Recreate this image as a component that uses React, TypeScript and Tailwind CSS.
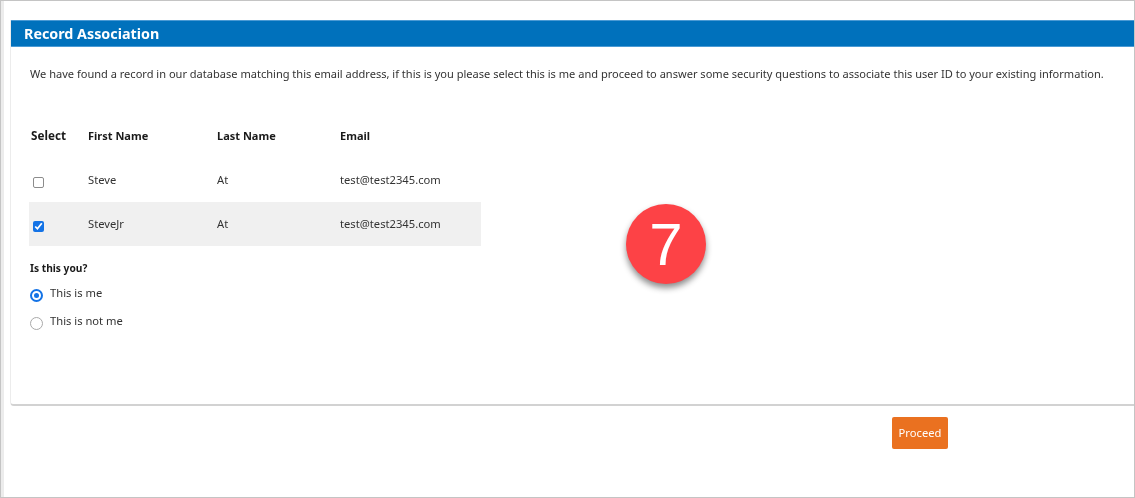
export default function App() {
  const rows = [
    { first: "Steve", checked: false },
    { first: "SteveJr", checked: true },
  ];
  return (
    <div className="relative h-[498px] w-[1135px] overflow-hidden border border-[#c4c4c4] bg-white font-['Noto_Sans',sans-serif] text-[#333]">
      <div className="h-full border-l-[3px] border-[#ececec] pl-[6px] pt-[19px] blur-[0.35px]">
        <div className="h-[386px] rounded-bl-[4px] border-b-2 border-l border-[#d2d2d2] border-l-[#ececec]">
          <div className="flex h-[27px] items-center border-y border-[#4a9ad4] bg-[#0071bc] pl-[13px] text-[14.3px] font-bold text-white">
            Record Association
          </div>
          <p className="mt-[18px] ml-[19px] whitespace-nowrap text-[11.05px] leading-[18px] text-[#333]">
            We have found a record in our database matching this email address, if this is you please select this is me and proceed to answer some security questions to associate this user ID to your existing information.
          </p>
          <div className="ml-[18px] mt-[31px] w-[452px] text-[11.2px]">
            <div className="grid h-[44px] grid-cols-[59px_129px_123px_1fr] items-center text-[11px] font-bold text-[#1a1a1a]">
              <span className="pl-[2px] text-[11.7px]">Select</span>
              <span>First Name</span>
              <span>Last Name</span>
              <span>Email</span>
            </div>
            {rows.map((r) => (
              <div
                key={r.first}
                className={`grid h-[44px] grid-cols-[59px_129px_123px_1fr] items-center text-[#333] ${r.checked ? "bg-[#f0f0f0]" : ""}`}
              >
                <span className="flex pl-[4px] pt-[5px]">
                  {r.checked ? (
                    <input type="checkbox" readOnly checked className="m-0 h-[11px] w-[11px] accent-[#1473e6]" />
                  ) : (
                    <input type="checkbox" readOnly className="m-0 h-[11px] w-[11px] appearance-none rounded-[2px] border border-[#8c8c8c] bg-white" />
                  )}
                </span>
                <span>{r.first}</span>
                <span>At</span>
                <span>test@test2345.com</span>
              </div>
            ))}
          </div>
          <div className="ml-[19px] mt-[14px] text-[10.2px] font-bold leading-[16px] text-[#1a1a1a]">Is this you?</div>
          <div className="ml-[19px] mt-[10px] flex flex-col gap-[15px] text-[11.2px] text-[#333]">
            <label className="flex h-[13px] items-start gap-[7px]">
              <span className="mt-[3px] flex h-[13px] w-[13px] items-center justify-center rounded-full border-2 border-[#1473e6] bg-white">
                <span className="h-[5px] w-[5px] rounded-full bg-[#1473e6]" />
              </span>
              <span className="-mt-[1px] leading-[16px]">This is me</span>
            </label>
            <label className="flex h-[13px] items-start gap-[7px]">
              <span className="mt-[3px] h-[13px] w-[13px] rounded-full border border-[#a8a8a8] bg-white" />
              <span className="-mt-[1px] leading-[16px]">This is not me</span>
            </label>
          </div>
        </div>
        <div className="mt-[11px] flex justify-end pr-[186px]">
          <button className="h-[32px] w-[56px] rounded-[2px] bg-[#ea7120] text-[11.2px] text-white">Proceed</button>
        </div>
      </div>
      <div className="absolute left-[625px] top-[203px] flex h-[80px] w-[80px] items-center justify-center rounded-full bg-[#fd4246] pt-[1px] font-['Liberation_Sans',sans-serif] text-[60px] leading-none text-white shadow-[0_4px_6px_rgba(0,0,0,0.45)]">
        7
      </div>
    </div>
  );
}
